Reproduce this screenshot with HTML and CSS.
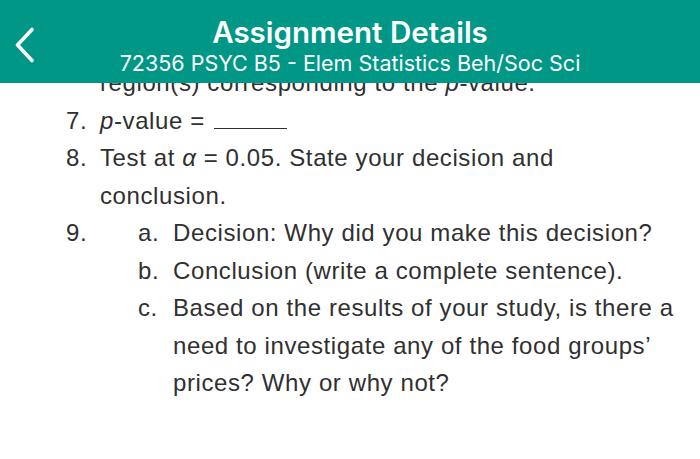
FILE: index.html
```html
<!DOCTYPE html>
<html>
<head>
<meta charset="utf-8">
<link rel="stylesheet" href="styles.css">
</head>
<body>
<div class="screen">
  <header class="topbar">
    <div class="back">
      <svg width="26" height="36" viewBox="0 0 26 36"><path d="M20 2.5 L5.5 18 L20 33.5" fill="none" stroke="#fff" stroke-width="3.6" stroke-linecap="round" stroke-linejoin="round"/></svg>
    </div>
    <div class="titles">
      <div class="title">Assignment Details</div>
      <div class="subtitle">72356 PSYC B5 - Elem Statistics Beh/Soc Sci</div>
    </div>
    <div></div>
  </header>
  <main class="content">
    <div class="list">
      <div class="row"><span class="num"></span><span class="txt">region(s) corresponding to the <i>p</i>-value.</span></div>
      <div class="row"><span class="num">7.</span><span class="txt"><i>p</i>-value = <span class="blank"></span></span></div>
      <div class="row"><span class="num">8.</span><span class="txt">Test at <i>α</i> = 0.05. State your decision and conclusion.</span></div>
      <div class="row"><span class="num">9.</span>
        <div class="sub">
          <div class="row"><span class="let">a.</span><span class="txt">Decision: Why did you make this decision?</span></div>
          <div class="row"><span class="let">b.</span><span class="txt">Conclusion (write a complete sentence).</span></div>
          <div class="row"><span class="let">c.</span><span class="txt">Based on the results of your study, is there a need to investigate any of the food groups’ prices? Why or why not?</span></div>
        </div>
      </div>
    </div>
  </main>
</div>
</body>
</html>
```
FILE: styles.css
```css
html, body { margin: 0; padding: 0; background: #fff; }
.screen { width: 700px; height: 459px; overflow: hidden; display: flex; flex-direction: column; }
.topbar {
  height: 83px; flex: none; background: #009787; color: #fff;
  display: grid; grid-template-columns: 1fr auto 1fr; align-items: start;
  font-family: Inter, "Noto Sans", sans-serif; position: relative; z-index: 2;
}
.back { padding-left: 12px; padding-top: 27px; display: flex; }
.titles { text-align: center; padding-top: 15px; }
.title { font-size: 29.5px; font-weight: 600; line-height: 35px; }
.subtitle { font-size: 21.5px; line-height: 26px; }
.content { flex: 1; overflow: hidden; font-family: "Liberation Sans", Arial, sans-serif; font-size: 24px; letter-spacing: 0.6px; line-height: 37.5px; color: #303030; }
.list { margin-top: -19px; padding-left: 66px; padding-right: 24px; }
.row { display: flex; }
.num { width: 34px; flex: none; }
.sub { margin-left: 38px; flex: 1; }
.let { width: 35px; flex: none; }
.txt { flex: 1; }
.blank { display: inline-block; width: 73px; height: 20px; border-bottom: 1.5px solid #303030; vertical-align: baseline; margin-left: 2px; }
```
